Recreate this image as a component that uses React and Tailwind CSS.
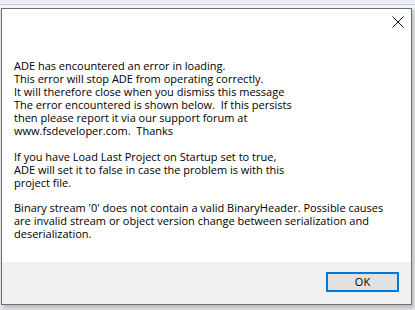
export default function App() {
  return (
    <div className="w-[415px] h-[310px] overflow-hidden bg-[#e4e6e9] flex flex-col">
      <div className="h-[5px] bg-[#e9edf2] border-b border-[#c6cacf] shrink-0"></div>
      <div className="h-[3px] bg-[#f2f4f7] shrink-0"></div>
      <div className="ml-[1px] w-[411px] h-[297px] border border-[#6e6e6e] bg-white flex flex-col shadow-[2px_3px_4px_rgba(0,0,0,0.18)]">
        <div className="h-[38px] flex justify-end pr-[6px] pt-[6px] shrink-0">
          <svg width="12" height="12" viewBox="0 0 12 12" className="mr-[1px] mt-[1px]">
            <path d="M0.5 0.5 L11.5 11.5 M11.5 0.5 L0.5 11.5" stroke="#111" strokeWidth="1" />
          </svg>
        </div>
        <div
          className="flex-1 pl-[12px] pt-[13px] text-[11px] leading-[12.95px] text-[#000] whitespace-pre"
          style={{ fontFamily: '"Segoe UI", "Open Sans", "Noto Sans", sans-serif' }}
        >
          <p>ADE has encountered an error in loading.</p>
          <p>This error will stop ADE from operating correctly.</p>
          <p>It will therefore close when you dismiss this message</p>
          <p>The error encountered is shown below.  If this persists</p>
          <p>then please report it via our support forum at</p>
          <p>www.fsdeveloper.com.  Thanks</p>
          <p>&nbsp;</p>
          <p>If you have Load Last Project on Startup set to true,</p>
          <p>ADE will set it to false in case the problem is with this</p>
          <p>project file.</p>
          <p>&nbsp;</p>
          <p>Binary stream '0' does not contain a valid BinaryHeader. Possible causes</p>
          <p>are invalid stream or object version change between serialization and</p>
          <p>deserialization.</p>
        </div>
        <div className="h-[42px] bg-[#f0f0f0] flex justify-end items-start pt-[10px] pr-[12px] shrink-0">
          <button
            className="w-[73px] h-[20px] bg-[#e1e1e1] border-2 border-[#0078d7] text-[11px] text-black flex items-center justify-center"
            style={{ fontFamily: '"Segoe UI", "Open Sans", "Noto Sans", sans-serif' }}
          >
            OK
          </button>
        </div>
      </div>
    </div>
  );
}
